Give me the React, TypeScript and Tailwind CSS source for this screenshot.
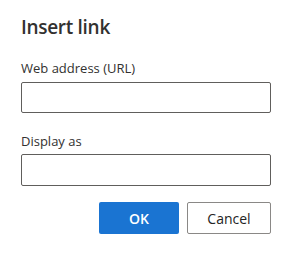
export default function App() {
  return (
    <div className="w-[294px] h-[257px] bg-white pt-[14px] pl-[21px] pr-[23px] font-['Open_Sans',sans-serif] text-[#323130]">
      <h1 className="text-[19px] leading-[26px] font-semibold tracking-[-0.3px]">Insert link</h1>

      <label className="block mt-[18px] text-[13px] leading-[20px]">Web address (URL)</label>
      <input
        type="text"
        className="block mt-[4px] w-[250px] h-[31px] border border-[#605e5c] rounded-[2px] px-2 text-sm outline-none"
      />

      <label className="block mt-[18px] text-[13px] leading-[20px]">Display as</label>
      <input
        type="text"
        className="block mt-[3px] w-[250px] h-[32px] border border-[#605e5c] rounded-[2px] px-2 text-sm outline-none"
      />

      <div className="flex justify-end gap-[8px] mt-[16px] w-[250px]">
        <button className="w-[80px] h-[32px] rounded-[2px] bg-[#1a74d2] text-white text-[14px] font-semibold">
          OK
        </button>
        <button className="w-[84px] h-[32px] rounded-[2px] border border-[#8a8886] bg-white text-[#242424] text-[14px]">
          Cancel
        </button>
      </div>
    </div>
  );
}
